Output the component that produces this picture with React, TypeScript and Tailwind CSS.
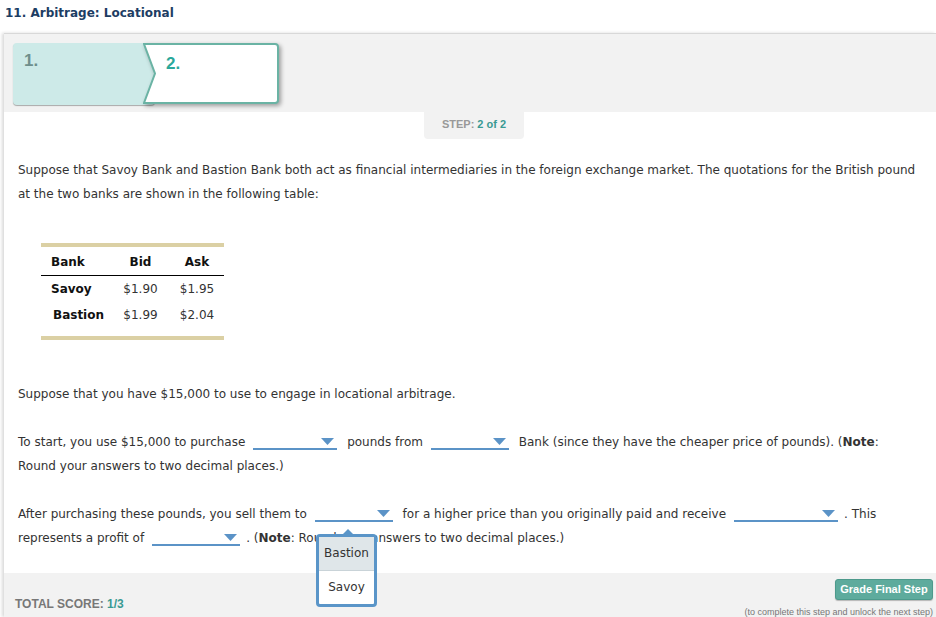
import React from "react";

function Drop({ w }: { w: string }) {
  return (
    <span
      className={`relative ml-[8px] mr-[6px] inline-block h-[15px] border-b-2 border-[#5b93c7] align-[-4px] ${w}`}
    >
      <svg
        className="absolute right-[3px] top-[3px]"
        width="13"
        height="7"
        viewBox="0 0 13 7"
      >
        <path d="M0 0 H13 L6.5 7 Z" fill="#5b93c7" />
      </svg>
    </span>
  );
}

export default function App() {
  return (
    <div className="relative h-[617px] w-[936px] overflow-hidden bg-white font-['DejaVu_Sans',Verdana,sans-serif] text-[12px] text-[#333]">
      {/* Title */}
      <div className="h-[33px] px-[5px] pt-[4px] text-[12px] font-bold text-[#1d3d63]">
        11. Arbitrage: Locational
      </div>

      {/* Panel */}
      <div className="ml-[4px] flex h-[584px] flex-col border-t border-[#d8d8d8] shadow-[-2px_0_3px_rgba(0,0,0,0.15)]">
        {/* Step tabs */}
        <div className="flex h-[78px] shrink-0 bg-[#f2f2f2] pl-[9px] pt-[9px] font-['Liberation_Sans',Arial,sans-serif]">
          <div className="relative h-[62px] w-[142px] rounded-[4px] bg-[#cdeae8] shadow-[0_1px_1px_rgba(0,0,0,0.3)]">
            <span className="absolute left-[11px] top-[5px] text-[17px] font-bold text-[#6f8f8c]">
              1.
            </span>
          </div>
          <div className="relative -ml-[12px] h-[62px] w-[137px]">
            <svg
              className="absolute left-0 top-0 drop-shadow-[2px_2px_2px_rgba(0,0,0,0.35)]"
              width="137"
              height="62"
              viewBox="0 0 137 62"
            >
              <path
                d="M1 1 H132 Q135 1 135 4 V57 Q135 60 132 60 H1 L12 30.5 Z"
                fill="#ffffff"
                stroke="#6ab3a4"
                strokeWidth="2"
              />
            </svg>
            <span className="absolute left-[23px] top-[8px] text-[17px] font-bold text-[#2aa89a]">
              2.
            </span>
          </div>
        </div>

        {/* Content */}
        <div className="relative flex-1 bg-white">
          <div className="ml-[420px] flex h-[27px] w-[100px] items-center justify-center rounded-b-[4px] bg-[#f2f2f2] pb-[2px] font-['Liberation_Sans',Arial,sans-serif] text-[11px] font-bold text-[#999]">
            STEP:&nbsp;<span className="text-[#3a9a93]">2 of 2</span>
          </div>

          <div className="px-[14px] leading-[24px] whitespace-nowrap">
            <p className="mt-[19px]">
              Suppose that Savoy Bank and Bastion Bank both act as financial intermediaries in the foreign exchange market. The quotations for the British pound
              <br />
              at the two banks are shown in the following table:
            </p>

            {/* Table */}
            <div className="ml-[23px] mt-[37px] w-[183px] border-y-4 border-[#dbd0a4] pb-[8px]">
              <table className="w-full table-fixed border-collapse text-left leading-[26px]">
                <thead>
                  <tr className="border-b border-black font-bold text-[#111]">
                    <th className="w-[70px] pl-[10px] pt-[2px]">Bank</th>
                    <th className="w-[59px] pt-[2px] text-center">Bid</th>
                    <th className="pt-[2px] text-center">Ask</th>
                  </tr>
                </thead>
                <tbody>
                  <tr>
                    <td className="pl-[10px] font-bold text-[#111]">Savoy</td>
                    <td className="text-center">$1.90</td>
                    <td className="text-center">$1.95</td>
                  </tr>
                  <tr>
                    <td className="pl-[12px] font-bold text-[#111]">Bastion</td>
                    <td className="text-center">$1.99</td>
                    <td className="text-center">$2.04</td>
                  </tr>
                </tbody>
              </table>
            </div>

            <p className="mt-[42px]">
              Suppose that you have $15,000 to use to engage in locational arbitrage.
            </p>

            <p className="mt-[24px]">
              To start, you use $15,000 to purchase
              <Drop w="w-[84px]" />{" "}
              pounds from
              <Drop w="w-[78px]" />{" "}
              Bank (since they have the cheaper price of pounds). (<b>Note</b>:
              <br />
              Round your answers to two decimal places.)
            </p>

            <p className="mt-[24px]">
              After purchasing these pounds, you sell them to
              <Drop w="w-[78px]" />{" "}
              for a higher price than you originally paid and receive
              <Drop w="w-[104px]" />
              . This
              <br />
              represents a profit of
              <Drop w="w-[88px]" />
              . (<b>Note</b>: Round your answers to two decimal places.)
            </p>
          </div>
        </div>

        {/* Footer */}
        <div className="flex h-[44px] shrink-0 justify-between bg-[#f2f2f2] font-['Liberation_Sans',Arial,sans-serif]">
          <div className="pl-[11px] pt-[22px] text-[12px] font-bold text-[#777]">
            TOTAL SCORE: <span className="text-[#3a9a93]">1/3</span>
          </div>
          <div className="flex flex-col items-end pr-[3px] pt-[6px]">
            <button className="h-[21px] w-[98px] rounded-[3px] border border-[#4d9a8c] bg-[#5eab9d] text-[11px] font-bold text-white shadow-[0_1px_1px_rgba(0,0,0,0.25)]">
              Grade Final Step
            </button>
            <span className="mt-[7px] text-[9px] leading-[10px] text-[#777]">
              (to complete this step and unlock the next step)
            </span>
          </div>
        </div>
      </div>

      {/* Open dropdown menu */}
      <div className="absolute left-[316px] top-[534px] w-[61px] rounded-[4px] border-[3px] border-[#5a95c8] bg-white text-center leading-[33px] font-['DejaVu_Sans',Verdana,sans-serif] text-[12px] text-[#333]">
        <svg
          className="absolute left-[23px] -top-[8px]"
          width="12"
          height="6"
          viewBox="0 0 12 6"
        >
          <path d="M0 6 L6 0 L12 6 Z" fill="#5a95c8" />
        </svg>
        <div className="border-b border-[#c9d3d8] bg-[#dfe6e9]">Bastion</div>
        <div>Savoy</div>
      </div>
    </div>
  );
}
